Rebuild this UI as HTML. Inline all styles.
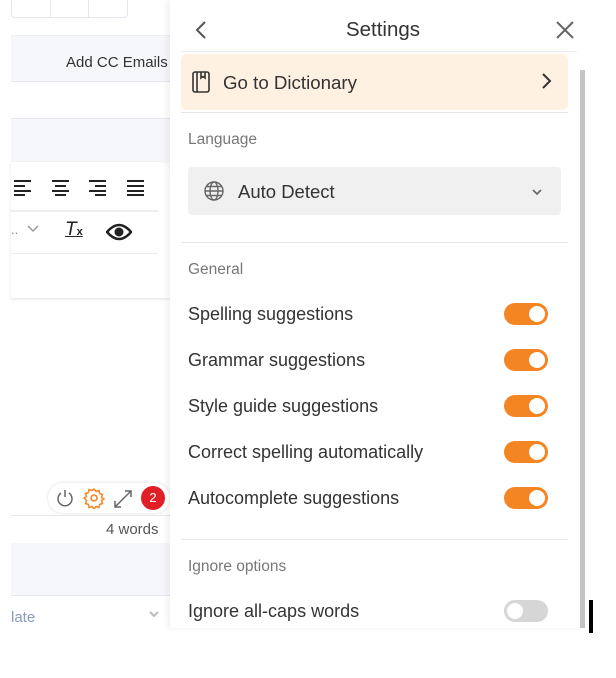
<!DOCTYPE html>
<html><head><style>
body{margin:0;width:616px;height:678px;background:#fff;font-family:"Liberation Sans",sans-serif;position:relative;overflow:hidden}
.a{position:absolute}
.tg{position:absolute;left:504px;width:44px;height:22px;border-radius:11px;background:#f48523}
.tg::after{content:"";position:absolute;right:3px;top:3px;width:16px;height:16px;border-radius:50%;background:#fff}
.lbl{position:absolute;left:188px;font-size:18px;color:#333;font-family:"Liberation Sans",sans-serif}
</style></head><body>
<div class="a" style="left:11px;top:0;width:159px;height:628px;background:#fff"></div>
<div class="a" style="left:11px;top:0;width:115px;height:17px;border:1px solid #e6e7ee;border-top:none;border-radius:0 0 4px 4px;background:#fff"></div>
<div class="a" style="left:50px;top:0;width:1px;height:17px;background:#e6e7ee"></div>
<div class="a" style="left:88px;top:0;width:1px;height:17px;background:#e6e7ee"></div>
<div class="a" style="left:11px;top:35px;width:159px;height:45px;background:#f6f7fa;border-top:1px solid #eceef2;border-bottom:1px solid #e6e7ee"></div>
<div class="a" style="left:66px;top:54px;font-size:15px;color:#333">Add CC Emails</div>
<div class="a" style="left:11px;top:118px;width:159px;height:44px;background:#f6f7fa;border-top:1px solid #e6e7ee"></div>
<div class="a" style="left:11px;top:162px;width:159px;height:136px;background:#fff;border-radius:0 10px 0 0;box-shadow:0 1px 3px rgba(0,0,0,.12)"></div>
<div class="a" style="left:11px;top:210px;width:147px;height:2px;background:#eceef2"></div>
<div class="a" style="left:11px;top:253px;width:147px;height:1px;background:#eceef2"></div>
<svg class="a" style="left:12px;top:178px" width="140" height="20" stroke="#222" stroke-width="2">
<path d="M2 3h17M2 8h11M2 13h17M2 17h11"/><path d="M40 3h17M43 8h11M40 13h17M43 17h11"/><path d="M77 3h17M83 8h11M77 13h17M83 17h11"/><path d="M115 3h17M115 8h17M115 13h17M115 17h17"/></svg>
<div class="a" style="left:11px;top:222px;font-size:13px;color:#888">..</div>
<svg class="a" style="left:26px;top:224px" width="14" height="10"><path d="M2 2l5 5 5-5" fill="none" stroke="#999" stroke-width="1.5"/></svg>
<div class="a" style="left:65px;top:219px;font-size:19px;font-style:italic;color:#222;text-decoration:underline">T<span style="font-size:11px;font-style:normal;font-weight:bold">x</span></div>
<svg class="a" style="left:106px;top:222px" width="26" height="20"><path d="M1 10Q13-4 25 10Q13 24 1 10z" fill="none" stroke="#222" stroke-width="2.5"/><circle cx="13" cy="10" r="4.5" fill="#222"/></svg>
<div class="a" style="left:48px;top:483px;width:122px;height:30px;background:#fff;border-radius:15px;box-shadow:0 0 3px rgba(0,0,0,.15)"></div>
<svg class="a" style="left:56px;top:489px" width="18" height="18"><path d="M5 4A7 7 0 1 0 13 4M9 1v7" fill="none" stroke="#666" stroke-width="1.5"/></svg>
<svg class="a" style="left:83px;top:487px" width="22" height="22"><circle cx="11" cy="11" r="3" fill="none" stroke="#f48523" stroke-width="1.6"/><path d="M11 2l2 2.5 3-1 .5 3 3 1-1 3 2.5 1.5-2.5 1.5 1 3-3 1-.5 3-3-1-2 2.5-2-2.5-3 1-.5-3-3-1 1-3L1 11l2.5-1.5-1-3 3-1 .5-3 3 1z" fill="none" stroke="#f48523" stroke-width="1.5"/></svg>
<svg class="a" style="left:113px;top:489px" width="20" height="20" stroke="#666" stroke-width="1.5" fill="none"><path d="M2 18L18 2M12 2h6v6M2 12v6h6"/></svg>
<div class="a" style="left:141px;top:486px;width:24px;height:24px;border-radius:50%;background:#e11f26;color:#fff;font-size:13px;text-align:center;line-height:24px">2</div>
<div class="a" style="left:11px;top:515px;width:159px;height:1px;background:#e6e7ee"></div>
<div class="a" style="left:106px;top:521px;font-size:15px;color:#555">4 words</div>
<div class="a" style="left:11px;top:543px;width:159px;height:52px;background:#f6f7fa;border-bottom:1px solid #e6e7ee"></div>
<div class="a" style="left:11px;top:609px;font-size:15px;color:#8a9bc0">late</div>
<svg class="a" style="left:148px;top:610px" width="12" height="10"><path d="M2 2l4 4 4-4" fill="none" stroke="#bbb" stroke-width="2"/></svg>
<div class="a" style="left:170px;top:0;width:416px;height:628px;background:#fff;box-shadow:-3px 0 6px rgba(0,0,0,.06)"></div>
<svg class="a" style="left:194px;top:20px" width="14" height="20"><path d="M11 2L3 10l8 8" fill="none" stroke="#555" stroke-width="2"/></svg>
<div class="a" style="left:175px;top:18px;width:416px;text-align:center;font-size:20.5px;color:#333">Settings</div>
<svg class="a" style="left:555px;top:20px" width="20" height="20"><path d="M2 2l16 16M18 2L2 18" stroke="#666" stroke-width="2"/></svg>
<div class="a" style="left:181px;top:51px;width:396px;height:1px;background:#eee"></div>
<div class="a" style="left:580px;top:70px;width:5px;height:558px;background:#c4c4c4"></div>
<div class="a" style="left:181px;top:54px;width:387px;height:56px;background:#fff1e2;border-radius:6px"></div>
<svg class="a" style="left:192px;top:71px" width="18" height="22" fill="none" stroke="#333" stroke-width="1.6"><rect x="1" y="1" width="16" height="20" rx="2"/><path d="M5 1v20M9 1v6l2-1.5 2 1.5V1"/></svg>
<div class="lbl" style="left:223px;top:72px;font-size:18.7px">Go to Dictionary</div>
<svg class="a" style="left:541px;top:72px" width="12" height="18"><path d="M2 2l7 7-7 7" fill="none" stroke="#333" stroke-width="2"/></svg>
<div class="a" style="left:181px;top:112px;width:387px;height:1px;background:#e6e6e6"></div>
<div class="lbl" style="top:131px;font-size:15.5px;color:#777">Language</div>
<div class="a" style="left:188px;top:167px;width:373px;height:48px;background:#f0f0f0;border-radius:4px"></div>
<svg class="a" style="left:204px;top:181px" width="20" height="20" fill="none" stroke="#666" stroke-width="1.4"><circle cx="10" cy="10" r="9"/><ellipse cx="10" cy="10" rx="4" ry="9"/><path d="M1 10h18M2.5 5.5h15M2.5 14.5h15"/></svg>
<div class="lbl" style="left:238px;top:181px;font-size:18.5px">Auto Detect</div>
<svg class="a" style="left:531px;top:188px" width="12" height="8"><path d="M2 2l4 4 4-4" fill="none" stroke="#666" stroke-width="1.6"/></svg>
<div class="a" style="left:181px;top:242px;width:387px;height:1px;background:#e6e6e6"></div>
<div class="lbl" style="top:261px;font-size:15.5px;color:#777">General</div>
<div class="lbl" style="top:304px">Spelling suggestions</div><div class="tg" style="top:303px"></div>
<div class="lbl" style="top:350px">Grammar suggestions</div><div class="tg" style="top:349px"></div>
<div class="lbl" style="top:396px">Style guide suggestions</div><div class="tg" style="top:395px"></div>
<div class="lbl" style="top:442px">Correct spelling automatically</div><div class="tg" style="top:441px"></div>
<div class="lbl" style="top:488px">Autocomplete suggestions</div><div class="tg" style="top:487px"></div>
<div class="a" style="left:181px;top:539px;width:387px;height:1px;background:#e6e6e6"></div>
<div class="lbl" style="top:558px;font-size:15.5px;color:#777">Ignore options</div>
<div class="lbl" style="top:601px">Ignore all-caps words</div>
<div class="a" style="left:504px;top:600px;width:44px;height:22px;border-radius:11px;background:#d6d6d6"><div style="position:absolute;left:3px;top:3px;width:16px;height:16px;border-radius:50%;background:#fff"></div></div>
<div class="a" style="left:589px;top:600px;width:4px;height:33px;background:#000"></div>
</body></html>
